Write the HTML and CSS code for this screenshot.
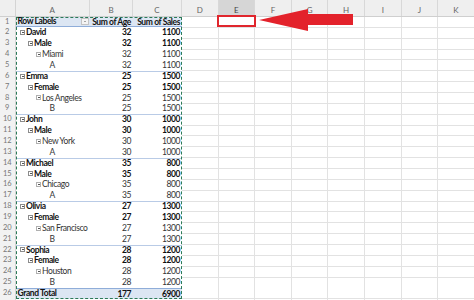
FILE: index.html
```html
<!DOCTYPE html>
<html lang="en">
<head>
  <meta charset="UTF-8">
  <title>Pivot table</title>
  <link rel="stylesheet" href="styles.css">
</head>
<body>
  <div class="sheet">
    <div class="colhead">
      <span class="corner"></span>
      <span class="ch col-a">A</span>
      <span class="ch col-b">B</span>
      <span class="ch col-c">C</span>
      <span class="ch">D</span>
      <span class="ch sel">E</span>
      <span class="ch">F</span>
      <span class="ch">G</span>
      <span class="ch">H</span>
      <span class="ch">I</span>
      <span class="ch">J</span>
      <span class="ch">K</span>
    </div>

    <div class="body">
      <div class="rownums">
        <span>1</span><span>2</span><span>3</span><span>4</span><span>5</span><span>6</span><span>7</span><span>8</span><span>9</span>
        <span>10</span><span>11</span><span>12</span><span>13</span><span>14</span><span>15</span><span>16</span><span>17</span><span>18</span>
        <span>19</span><span>20</span><span>21</span><span>22</span><span>23</span><span>24</span><span>25</span><span>26</span><span></span>
      </div>

      <div class="pivot">
        <div class="pr head"><span class="col-a">Row Labels<i class="filter"></i></span><span class="col-b">Sum of Age</span><span class="col-c">Sum of Sales</span></div>

        <div class="pr l0 first"><span class="col-a"><i class="tog"></i>David</span><span class="col-b">32</span><span class="col-c">1100</span></div>
        <div class="pr l1"><span class="col-a"><i class="tog"></i>Male</span><span class="col-b">32</span><span class="col-c">1100</span></div>
        <div class="pr l2"><span class="col-a"><i class="tog"></i>Miami</span><span class="col-b">32</span><span class="col-c">1100</span></div>
        <div class="pr l3"><span class="col-a">A</span><span class="col-b">32</span><span class="col-c">1100</span></div>

        <div class="pr l0"><span class="col-a"><i class="tog"></i>Emma</span><span class="col-b">25</span><span class="col-c">1500</span></div>
        <div class="pr l1"><span class="col-a"><i class="tog"></i>Female</span><span class="col-b">25</span><span class="col-c">1500</span></div>
        <div class="pr l2"><span class="col-a"><i class="tog"></i>Los Angeles</span><span class="col-b">25</span><span class="col-c">1500</span></div>
        <div class="pr l3"><span class="col-a">B</span><span class="col-b">25</span><span class="col-c">1500</span></div>

        <div class="pr l0"><span class="col-a"><i class="tog"></i>John</span><span class="col-b">30</span><span class="col-c">1000</span></div>
        <div class="pr l1"><span class="col-a"><i class="tog"></i>Male</span><span class="col-b">30</span><span class="col-c">1000</span></div>
        <div class="pr l2"><span class="col-a"><i class="tog"></i>New York</span><span class="col-b">30</span><span class="col-c">1000</span></div>
        <div class="pr l3"><span class="col-a">A</span><span class="col-b">30</span><span class="col-c">1000</span></div>

        <div class="pr l0"><span class="col-a"><i class="tog"></i>Michael</span><span class="col-b">35</span><span class="col-c">800</span></div>
        <div class="pr l1"><span class="col-a"><i class="tog"></i>Male</span><span class="col-b">35</span><span class="col-c">800</span></div>
        <div class="pr l2"><span class="col-a"><i class="tog"></i>Chicago</span><span class="col-b">35</span><span class="col-c">800</span></div>
        <div class="pr l3"><span class="col-a">A</span><span class="col-b">35</span><span class="col-c">800</span></div>

        <div class="pr l0"><span class="col-a"><i class="tog"></i>Olivia</span><span class="col-b">27</span><span class="col-c">1300</span></div>
        <div class="pr l1"><span class="col-a"><i class="tog"></i>Female</span><span class="col-b">27</span><span class="col-c">1300</span></div>
        <div class="pr l2"><span class="col-a"><i class="tog"></i>San Francisco</span><span class="col-b">27</span><span class="col-c">1300</span></div>
        <div class="pr l3"><span class="col-a">B</span><span class="col-b">27</span><span class="col-c">1300</span></div>

        <div class="pr l0"><span class="col-a"><i class="tog"></i>Sophia</span><span class="col-b">28</span><span class="col-c">1200</span></div>
        <div class="pr l1"><span class="col-a"><i class="tog"></i>Female</span><span class="col-b">28</span><span class="col-c">1200</span></div>
        <div class="pr l2"><span class="col-a"><i class="tog"></i>Houston</span><span class="col-b">28</span><span class="col-c">1200</span></div>
        <div class="pr l3"><span class="col-a">B</span><span class="col-b">28</span><span class="col-c">1200</span></div>

        <div class="pr total"><span class="col-a">Grand Total</span><span class="col-b">177</span><span class="col-c">6900</span></div>
      </div>

      <div class="grid"></div>
    </div>

    <!-- annotation: selected cell E1 and the arrow pointing at it -->
    <div class="pick"></div>
    <svg class="arrow" width="100" height="25" viewBox="0 0 100 25">
      <polygon points="2,12 51,1 51,6 96,6 96,17 51,17 51,23" fill="#e3222b"/>
    </svg>
  </div>
</body>
</html>
```

FILE: styles.css
```css
body {
  margin: 0;
  background: #fff;
  font-family: Lato, "Open Sans", sans-serif;
  font-size: 8.5px;
  letter-spacing: -0.4px;
  color: #222;
  overflow: hidden;
}

.sheet {
  position: relative;
  width: 474px;
  height: 300px;
  overflow: hidden;
}

/* column letters */
.colhead {
  display: flex;
  height: 16.5px;
  background: #efefef;
  border-bottom: 1px solid #cfcfcf;
  box-sizing: border-box;
}

.corner {
  flex: none;
  width: 15.5px;
  border-right: 1px solid #d4d4d4;
  box-sizing: border-box;
}

.ch {
  flex: none;
  width: 36.6px;
  box-sizing: border-box;
  border-right: 1px solid #d8d8d8;
  display: flex;
  align-items: flex-end;
  justify-content: center;
  padding-bottom: 1px;
  color: #666;
  font-size: 8px;
  letter-spacing: 0;
}

.ch.sel {
  background: #d6d6d6;
  color: #444;
}

.col-a { width: 74.5px; }
.col-b { width: 43px; }
.col-c { width: 49px; }

.body {
  display: flex;
}

/* row numbers */
.rownums {
  flex: none;
  width: 15.5px;
  background: #f2f2f2;
  border-right: 1px solid #d4d4d4;
  box-sizing: border-box;
}

.rownums span {
  display: block;
  height: 10.86px;
  line-height: 10.86px;
  text-align: center;
  color: #777;
  font-size: 7.5px;
  letter-spacing: 0;
}

/* pivot table A1:C26 */
.pivot {
  flex: none;
  outline: 1px dashed #2b7a58;
  outline-offset: -1px;
  align-self: flex-start;
}

.pr {
  display: flex;
  height: 10.86px;
  line-height: 10.86px;
}

.pr span {
  flex: none;
  box-sizing: border-box;
  white-space: nowrap;
}

.pr .col-a {
  display: flex;
  align-items: center;
  position: relative;
}

.pr .col-b,
.pr .col-c {
  text-align: right;
  padding-right: 2px;
}

.pr.head,
.pr.total {
  background: #dce6f3;
  font-weight: bold;
  color: #111;
}

.pr.head {
  border-bottom: 1px solid #8fadd9;
  box-sizing: border-box;
}

.pr.head .col-a { padding-left: 2px; }

.pr.total {
  border-top: 1px solid #8fadd9;
  box-sizing: border-box;
}

.pr.total .col-a { padding-left: 2px; }

.l0,
.l1 {
  font-weight: bold;
  color: #111;
}

.l2,
.l3 { color: #333; }

.l0 { box-shadow: inset 0 1px 0 #b9cbe6; }
.l0.first { box-shadow: none; }

.l0 .col-a { padding-left: 4.5px; }
.l1 .col-a { padding-left: 12.5px; }
.l2 .col-a { padding-left: 20.5px; }
.l3 .col-a { padding-left: 34px; }

.tog {
  flex: none;
  position: relative;
  width: 5px;
  height: 5px;
  margin-right: 1px;
  border: 1px solid #8c8c8c;
  box-sizing: border-box;
}

.tog::after {
  content: "";
  position: absolute;
  left: 0.5px;
  top: 1px;
  width: 2px;
  height: 1px;
  background: #555;
}

.l2 .tog { border-color: #b0b0b0; }

.filter {
  position: absolute;
  right: 1px;
  top: 1.5px;
  width: 8px;
  height: 7px;
  background: #f4f4f4;
  border: 1px solid #c4c4c4;
  box-sizing: border-box;
}

.filter::after {
  content: "";
  position: absolute;
  left: 2px;
  top: 2px;
  border-left: 1.5px solid transparent;
  border-right: 1.5px solid transparent;
  border-top: 1.5px solid #555;
}

/* empty cells D..K */
.grid {
  flex: 1;
  height: 293.22px;
  background-image:
    repeating-linear-gradient(to right, transparent 0 35.6px, #e2e2e2 35.6px 36.6px),
    repeating-linear-gradient(to bottom, transparent 0 9.86px, #e2e2e2 9.86px 10.86px);
}

.pick {
  position: absolute;
  left: 217px;
  top: 15px;
  width: 39px;
  height: 12px;
  border: 2px solid #e0262d;
  box-sizing: border-box;
}

.arrow {
  position: absolute;
  left: 257px;
  top: 8px;
}
```
